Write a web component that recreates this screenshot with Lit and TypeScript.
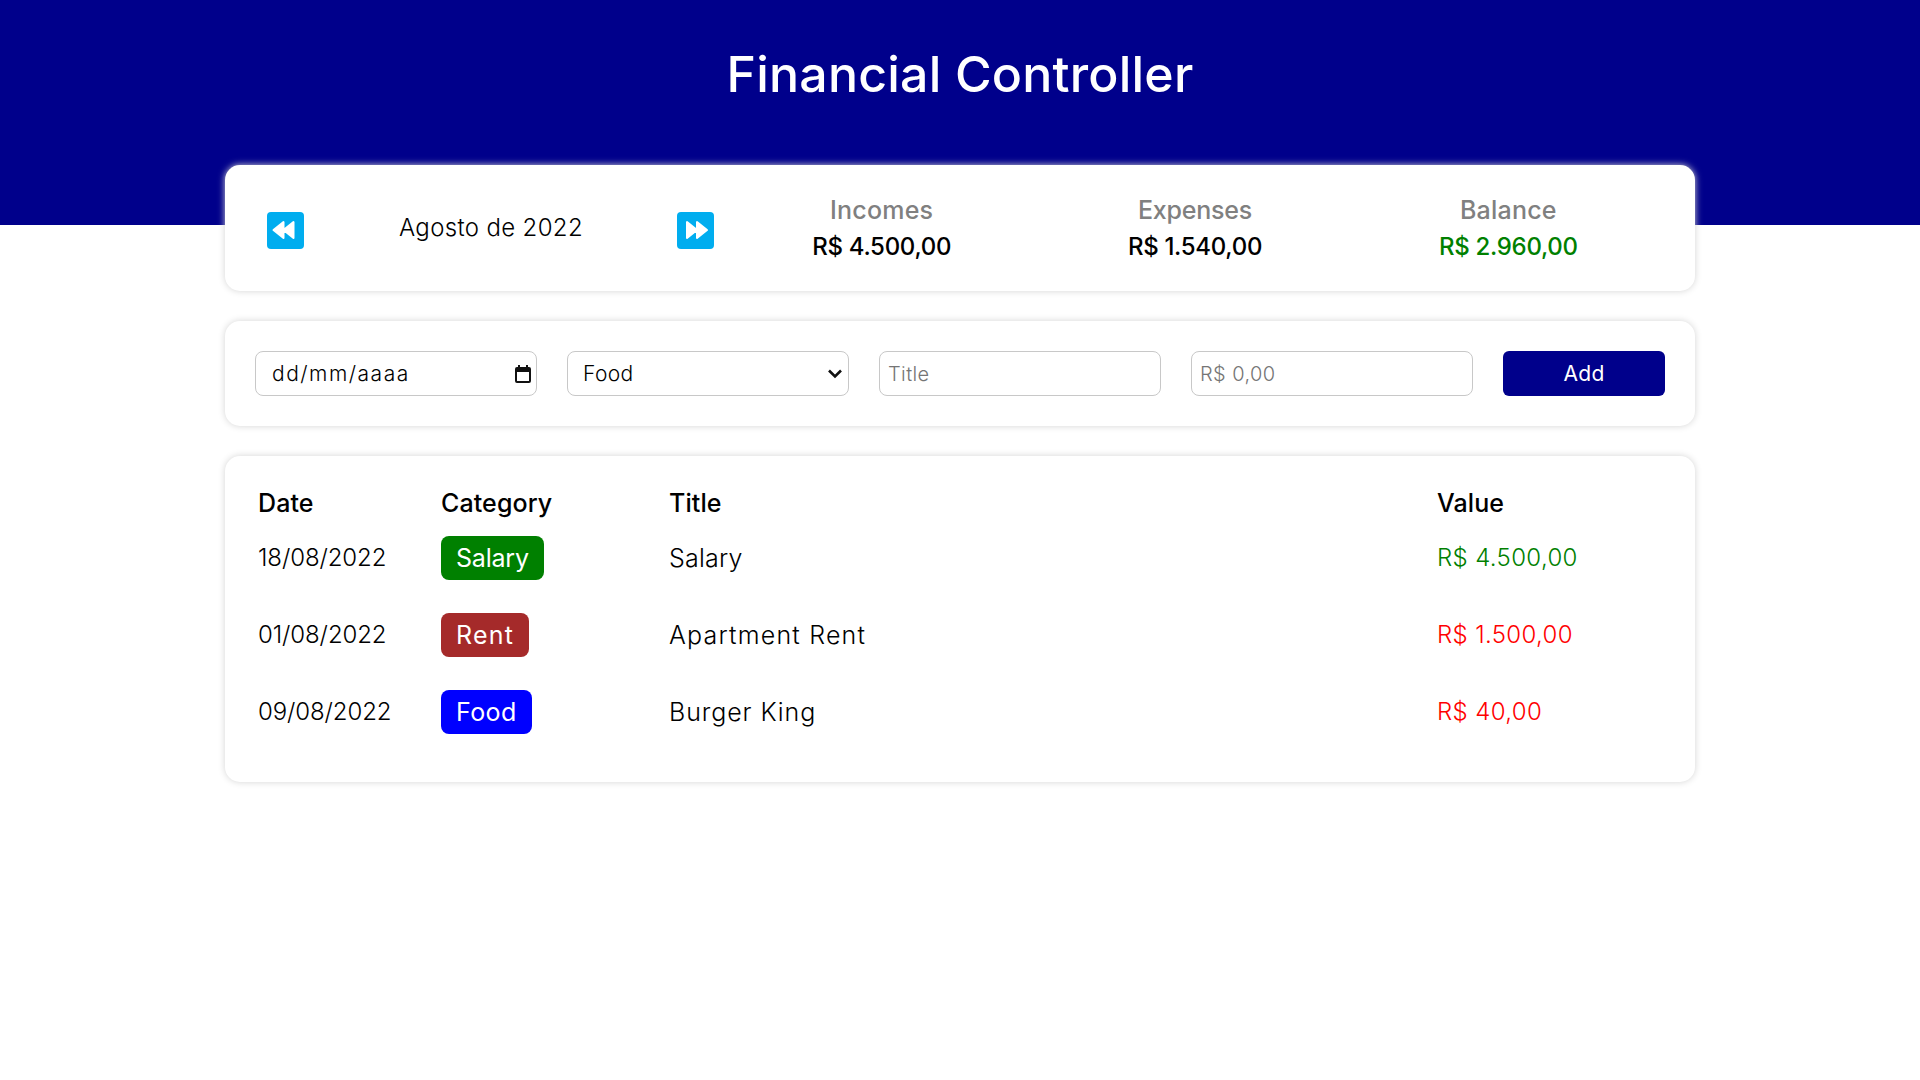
import { LitElement, html, css } from "lit";
import { customElement } from "lit/decorators.js";

const rows = [
  { date: "18/08/2022", cat: "Salary", cls: "salary", title: "Salary", tcls: "t-tight", value: "R$ 4.500,00", inc: true },
  { date: "01/08/2022", cat: "Rent", cls: "rent", title: "Apartment Rent", tcls: "t-wide", value: "R$ 1.500,00", inc: false },
  { date: "09/08/2022", cat: "Food", cls: "food", title: "Burger King", tcls: "t-mid", value: "R$ 40,00", inc: false },
];

@customElement("app-root")
export class AppRoot extends LitElement {
  static styles = css`
    :host { display: block; font-family: "Inter", "Liberation Sans", sans-serif; color: #000; background: #fff; min-height: 1080px; }
    * { box-sizing: border-box; }
    .header { height: 225px; background: #00008b; padding-top: 43px; }
    h1 { margin: 0; text-align: center; color: #fff; font-size: 50px; line-height: 62px; font-weight: 500; letter-spacing: 0.2px; }
    main { width: 1470px; margin: -60px auto 0; display: flex; flex-direction: column; gap: 30px; }
    .card { background: #fff; border-radius: 15px; box-shadow: 0 0 7px #d4d4d4; padding: 30px; }
    .summary { height: 126px; padding: 0 30px; display: grid; grid-template-columns: 1fr 2fr; align-items: center; }
    .month { display: grid; grid-template-columns: 61px 1fr 59px; align-items: center; justify-items: center; }
    .month span { font-size: 24px; font-weight: 300; letter-spacing: 0.35px; padding-bottom: 2px; }
    .arrow { display: block; width: 37px; height: 37px; margin-top: 4px; }
    .stats { display: grid; grid-template-columns: repeat(3, 1fr); text-align: center; }
    .stat-label { font-size: 25px; line-height: 30px; color: #808080; font-weight: 500; letter-spacing: 0.2px; }
    .stat-label.exp { letter-spacing: -0.2px; }
    .stat-value { font-size: 24px; line-height: 30px; margin-top: 7px; font-weight: 500; letter-spacing: -0.3px; }
    .green { color: #008000; }
    .red { color: #ff0000; }
    .form { display: grid; grid-template-columns: repeat(4, 1fr) 162px; gap: 30px; height: 105px; }
    .field { height: 45px; width: 100%; border: 1px solid #c8c8c8; border-radius: 8px; background: #fff; font: inherit; font-size: 20px; font-weight: 300; letter-spacing: 0.4px; color: #000; outline: none; }
    .field::placeholder { color: #757575; }
    input.field { padding: 0 8px; }
    select.field { padding: 0 15px; appearance: none; -webkit-appearance: none; font-size: 21px; }
    .select-wrap { position: relative; height: 45px; }
    .chev { position: absolute; right: 6px; top: 17px; width: 16px; height: 12px; pointer-events: none; }
    .date { display: flex; align-items: center; justify-content: space-between; padding: 0 3px 0 16px; font-size: 21px; letter-spacing: 1.5px; }
    .date svg { width: 20px; height: 20px; }
    .add { height: 45px; border: 0; border-radius: 6px; background: #00008b; color: #fff; font: inherit; font-size: 21px; letter-spacing: 0.3px; }
    table { width: 100%; border-collapse: collapse; table-layout: fixed; font-size: 24px; font-weight: 300; }
    .tbl { padding: 32px 30px 32px; }
    th { text-align: left; font-weight: 500; font-size: 25px; padding: 0 3px; height: 31px; line-height: 31px; letter-spacing: 0.1px; }
    td { padding: 0 3px; height: 77px; }
    .date-cell { letter-spacing: -0.1px; }
    .title-cell { font-size: 25px; }
    .t-tight { letter-spacing: 0.2px; }
    .t-wide { letter-spacing: 1.2px; }
    .t-mid { letter-spacing: 0.9px; }
    .value-cell { letter-spacing: 0.35px; }
    .badge { display: inline-block; height: 44px; line-height: 44px; padding: 0 15px; border-radius: 8px; color: #fff; vertical-align: middle; font-size: 25px; font-weight: 400; }
    .salary { background: #008000; letter-spacing: -0.2px; }
    .rent { background: #a52a2a; letter-spacing: 1.2px; }
    .food { background: #0000ff; letter-spacing: 0.4px; }
    .c1 { width: 183px; }
    .c2 { width: 228px; }
    .c4 { width: 231px; }
  `;

  render() {
    return html`
      <div class="header"><h1>Financial Controller</h1></div>
      <main>
        <section class="card summary">
          <div class="month">
            <svg class="arrow" viewBox="0 0 37 37" aria-label="Previous">
              <rect width="37" height="37" rx="4" fill="#00adef" />
              <path d="M6.5 18 16.5 10V26zM16.5 18 26.5 10V26z" fill="#fff" stroke="#fff" stroke-width="2" stroke-linejoin="round" />
            </svg>
            <span>Agosto de 2022</span>
            <svg class="arrow" viewBox="0 0 37 37" aria-label="Next">
              <rect width="37" height="37" rx="4" fill="#00adef" />
              <path d="M30 18 20 10V26zM20 18 10 10V26z" fill="#fff" stroke="#fff" stroke-width="2" stroke-linejoin="round" />
            </svg>
          </div>
          <div class="stats">
            <div><div class="stat-label">Incomes</div><div class="stat-value">R$ 4.500,00</div></div>
            <div><div class="stat-label exp">Expenses</div><div class="stat-value">R$ 1.540,00</div></div>
            <div><div class="stat-label">Balance</div><div class="stat-value green">R$ 2.960,00</div></div>
          </div>
        </section>
        <section class="card form">
          <div class="field date">
            <span>dd/mm/aaaa</span>
            <svg viewBox="0 0 20 20"><path d="M5 1v2H4a2 2 0 0 0-2 2v12a2 2 0 0 0 2 2h12a2 2 0 0 0 2-2V5a2 2 0 0 0-2-2h-1V1h-2v2H7V1zM4 8h12v9H4z" fill="#111" /></svg>
          </div>
          <div class="select-wrap">
            <select class="field"><option>Food</option><option>Rent</option><option>Salary</option></select>
            <svg class="chev" viewBox="0 0 16 12"><path d="M2 2.5 8 8.5l6-6" fill="none" stroke="#111" stroke-width="2.6" /></svg>
          </div>
          <input class="field" placeholder="Title" />
          <input class="field" placeholder="R$ 0,00" />
          <button class="add">Add</button>
        </section>
        <section class="card tbl">
          <table>
            <thead><tr><th class="c1">Date</th><th class="c2">Category</th><th>Title</th><th class="c4">Value</th></tr></thead>
            <tbody>
              ${rows.map((r) => html`<tr>
                <td class="date-cell">${r.date}</td>
                <td><span class="badge ${r.cls}">${r.cat}</span></td>
                <td class="title-cell ${r.tcls}">${r.title}</td>
                <td class="value-cell ${r.inc ? "green" : "red"}">${r.value}</td>
              </tr>`)}
            </tbody>
          </table>
        </section>
      </main>
    `;
  }
}
